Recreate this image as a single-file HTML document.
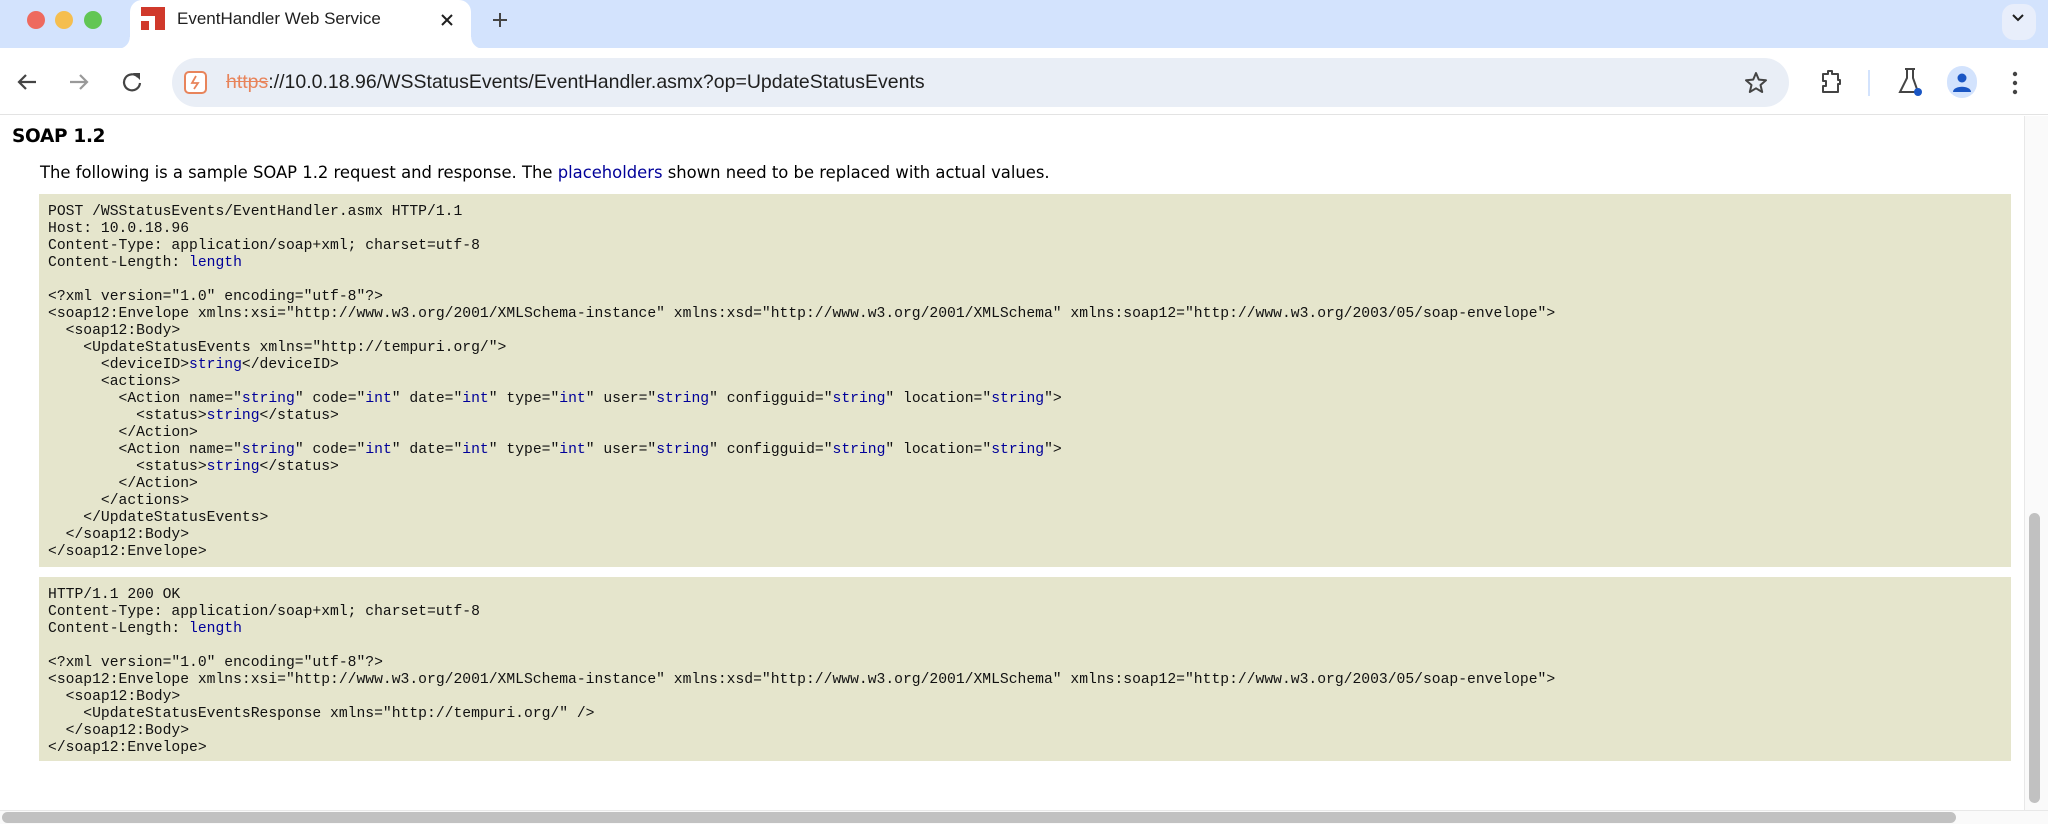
<!DOCTYPE html>
<html><head><meta charset="utf-8"><style>
*{margin:0;padding:0;box-sizing:border-box}
html,body{width:2048px;height:824px;overflow:hidden;background:#fff;position:relative}
.tabbar{position:absolute;left:0;top:0;width:2048px;height:48px;background:#d3e3fd}
.dot{position:absolute;top:11px;width:18px;height:18px;border-radius:50%}
.tab{position:absolute;left:130px;top:0;width:341px;height:49px;background:#fff;border-radius:12px 12px 0 0}
.tab:before,.tab:after{content:"";position:absolute;bottom:0;width:12px;height:12px}
.tab:before{left:-12px;background:radial-gradient(circle at 0 0,#d3e3fd 11.5px,#fff 12px)}
.tab:after{right:-12px;background:radial-gradient(circle at 100% 0,#d3e3fd 11.5px,#fff 12px)}
.toolbar{position:absolute;left:0;top:48px;width:2048px;height:67px;background:#fff;border-bottom:1px solid #e3e3e3}
.omni{position:absolute;left:172px;top:10px;width:1617px;height:49px;background:#e9eef6;border-radius:25px}
.content{position:absolute;left:0;top:116px;width:2024px;height:696px;background:#fff}
h3{position:absolute;left:12px;top:126px;font:bold 18.5px "DejaVu Sans",sans-serif;color:#000;letter-spacing:-0.3px}
p.d{position:absolute;left:40px;top:163px;font:16.4px "DejaVu Sans",sans-serif;color:#000;letter-spacing:0}
p.d a{color:#000099;text-decoration:none}
pre{position:absolute;left:39px;width:1972px;background:#e5e5cc;font:14.7px/17px "Liberation Mono",monospace;color:#111;padding:10px 9px 8px}
pre b{font-weight:normal;color:#000099}
</style></head><body>
<div class="tabbar">
<div class="dot" style="left:27px;background:#ee6a5f"></div>
<div class="dot" style="left:55px;background:#f5be4f"></div>
<div class="dot" style="left:84px;background:#62c654"></div>
<div class="tab">
<svg style="position:absolute;left:11px;top:7px" width="24" height="23"><path d="M0 0H24V23H14V9H0Z" fill="#d0392b"/><rect x="0" y="14" width="8" height="9" fill="#d0392b"/></svg>
<span style="position:absolute;left:47px;top:9px;font:17px 'Liberation Sans',sans-serif;color:#1f1f1f">EventHandler Web Service</span>
<svg style="position:absolute;left:310px;top:13px" width="14" height="14"><path d="M2 2L12 12M12 2L2 12" stroke="#1f1f1f" stroke-width="2"/></svg>
</div>
<svg style="position:absolute;left:491px;top:11px" width="18" height="18"><path d="M9 2V16M2 9H16" stroke="#444" stroke-width="2"/></svg>
<div style="position:absolute;left:2002px;top:4px;width:34px;height:36px;border-radius:12px;background:#e8eefb"></div>
<svg style="position:absolute;left:2011px;top:13px" width="14" height="10"><path d="M2 2L7 7L12 2" stroke="#1f1f1f" stroke-width="2" fill="none"/></svg>
</div>
<div class="toolbar">
<svg style="position:absolute;left:16px;top:24px" width="22" height="20"><path d="M20 10H3M10 3L3 10L10 17" stroke="#444" stroke-width="2.2" fill="none"/></svg>
<svg style="position:absolute;left:68px;top:24px" width="22" height="20"><path d="M2 10H19M12 3L19 10L12 17" stroke="#999" stroke-width="2.2" fill="none"/></svg>
<svg style="position:absolute;left:121px;top:23px" width="22" height="22"><path d="M17 6A8 8 0 1 0 19 12" stroke="#444" stroke-width="2.2" fill="none"/><path d="M12 2H19V9Z" fill="#444"/></svg>
<div class="omni">
<svg style="position:absolute;left:12px;top:13px" width="23" height="23"><rect x="1" y="1" width="21" height="21" rx="4" fill="#fff" stroke="#e8845b" stroke-width="2"/><path d="M12 5L8 12H14L10 18" stroke="#e8845b" stroke-width="1.8" fill="none"/></svg>
<span style="position:absolute;left:54px;top:13px;font:19.5px 'Liberation Sans',sans-serif;color:#1f1f1f;white-space:nowrap"><span style="color:#e8845b;text-decoration:line-through">https</span>://10.0.18.96/WSStatusEvents/EventHandler.asmx?op=UpdateStatusEvents</span>
<svg style="position:absolute;left:1572px;top:13px" width="24" height="24"><path d="M12 2L14.8 8.6L22 9.3L16.5 14L18.2 21L12 17.3L5.8 21L7.5 14L2 9.3L9.2 8.6Z" stroke="#444" stroke-width="2" fill="none" stroke-linejoin="round"/></svg>
</div>
<svg style="position:absolute;left:1818px;top:20px" width="26" height="28"><path d="M5 6H10V3H14V6H20V12H22V16H20V24H5V18H8V13H5Z" stroke="#444" stroke-width="2" fill="none" stroke-linejoin="round"/></svg>
<div style="position:absolute;left:1868px;top:22px;width:2px;height:26px;background:#d3e3fd"></div>
<svg style="position:absolute;left:1896px;top:18px" width="28" height="32"><path d="M9 3H19M11 3V12L4 26H22L17 12V3" stroke="#444" stroke-width="2" fill="none"/><circle cx="22" cy="26" r="4" fill="#1a56c4"/></svg>
<div style="position:absolute;left:1947px;top:18px;width:30px;height:32px;border-radius:15px;background:#d3e3fd"></div>
<svg style="position:absolute;left:1950px;top:22px" width="24" height="24"><circle cx="12" cy="8" r="4.5" fill="#1a56c4"/><path d="M3 22C3 15 21 15 21 22Z" fill="#1a56c4"/></svg>
<svg style="position:absolute;left:2010px;top:22px" width="10" height="26"><circle cx="5" cy="4" r="2.2" fill="#444"/><circle cx="5" cy="13" r="2.2" fill="#444"/><circle cx="5" cy="22" r="2.2" fill="#444"/></svg>
</div>
<div class="content"></div>
<h3>SOAP 1.2</h3>
<p class="d">The following is a sample SOAP 1.2 request and response. The <a>placeholders</a> shown need to be replaced with actual values.</p>
<pre style="top:194px;height:373px">POST /WSStatusEvents/EventHandler.asmx HTTP/1.1
Host: 10.0.18.96
Content-Type: application/soap+xml; charset=utf-8
Content-Length: <b>length</b>

&lt;?xml version="1.0" encoding="utf-8"?&gt;
&lt;soap12:Envelope xmlns:xsi="http://www.w3.org/2001/XMLSchema-instance" xmlns:xsd="http://www.w3.org/2001/XMLSchema" xmlns:soap12="http://www.w3.org/2003/05/soap-envelope"&gt;
  &lt;soap12:Body&gt;
    &lt;UpdateStatusEvents xmlns="http://tempuri.org/"&gt;
      &lt;deviceID&gt;<b>string</b>&lt;/deviceID&gt;
      &lt;actions&gt;
        &lt;Action name="<b>string</b>" code="<b>int</b>" date="<b>int</b>" type="<b>int</b>" user="<b>string</b>" configguid="<b>string</b>" location="<b>string</b>"&gt;
          &lt;status&gt;<b>string</b>&lt;/status&gt;
        &lt;/Action&gt;
        &lt;Action name="<b>string</b>" code="<b>int</b>" date="<b>int</b>" type="<b>int</b>" user="<b>string</b>" configguid="<b>string</b>" location="<b>string</b>"&gt;
          &lt;status&gt;<b>string</b>&lt;/status&gt;
        &lt;/Action&gt;
      &lt;/actions&gt;
    &lt;/UpdateStatusEvents&gt;
  &lt;/soap12:Body&gt;
&lt;/soap12:Envelope&gt;</pre>
<pre style="top:577px;height:184px">HTTP/1.1 200 OK
Content-Type: application/soap+xml; charset=utf-8
Content-Length: <b>length</b>

&lt;?xml version="1.0" encoding="utf-8"?&gt;
&lt;soap12:Envelope xmlns:xsi="http://www.w3.org/2001/XMLSchema-instance" xmlns:xsd="http://www.w3.org/2001/XMLSchema" xmlns:soap12="http://www.w3.org/2003/05/soap-envelope"&gt;
  &lt;soap12:Body&gt;
    &lt;UpdateStatusEventsResponse xmlns="http://tempuri.org/" /&gt;
  &lt;/soap12:Body&gt;
&lt;/soap12:Envelope&gt;</pre>
<div style="position:absolute;left:2024px;top:116px;width:24px;height:696px;background:#fafafa;border-left:1px solid #e8e8e8"></div>
<div style="position:absolute;left:2029px;top:513px;width:11px;height:290px;border-radius:6px;background:#c1c1c1"></div>
<div style="position:absolute;left:0;top:810px;width:2048px;height:14px;background:#fafafa;border-top:1px solid #e8e8e8"></div>
<div style="position:absolute;left:2px;top:812px;width:1954px;height:11px;border-radius:6px;background:#c1c1c1"></div>
</body></html>
